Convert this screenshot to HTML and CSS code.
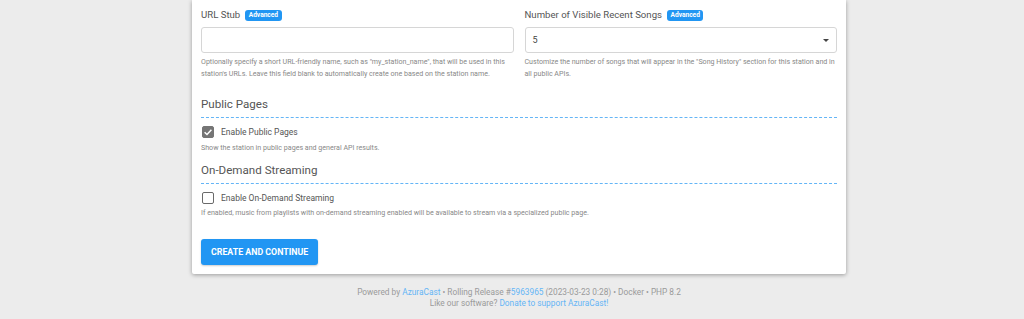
FILE: index.html
```html
<!DOCTYPE html>
<html>
<head>
<meta charset="utf-8">
<link rel="stylesheet" href="styles.css">
</head>
<body>
<div class="page">
  <div class="card">
    <div class="row">
      <div class="field">
        <div class="label">URL Stub <span class="badge">Advanced</span></div>
        <div class="input"></div>
        <div class="help">Optionally specify a short URL-friendly name, such as "my_station_name", that will be used in this station's URLs. Leave this field blank to automatically create one based on the station name.</div>
      </div>
      <div class="field">
        <div class="label">Number of Visible Recent Songs <span class="badge">Advanced</span></div>
        <div class="input select"><span>5</span><span class="caret"></span></div>
        <div class="help">Customize the number of songs that will appear in the "Song History" section for this station and in all public APIs.</div>
      </div>
    </div>

    <div class="section-title first">Public Pages</div>
    <div class="check-row"><span class="checkbox checked"><svg viewBox="0 0 12 12" width="12" height="12"><path d="M2.6 6.2 L5 8.5 L9.4 3.8" fill="none" stroke="#fff" stroke-width="1.5"/></svg></span><span class="check-label">Enable Public Pages</span></div>
    <div class="help small-gap">Show the station in public pages and general API results.</div>

    <div class="section-title">On-Demand Streaming</div>
    <div class="check-row"><span class="checkbox"></span><span class="check-label">Enable On-Demand Streaming</span></div>
    <div class="help tiny-gap">If enabled, music from playlists with on-demand streaming enabled will be available to stream via a specialized public page.</div>

    <button class="btn">CREATE AND CONTINUE</button>
  </div>
  <div class="footer">
    <div>Powered by <a>AzuraCast</a> • Rolling Release #<a>5963965</a> (2023-03-23 0:28) • Docker • PHP 8.2</div>
    <div>Like our software? <a>Donate to support AzuraCast!</a></div>
  </div>
</div>
</body>
</html>
```
FILE: styles.css
```css
html, body {
  margin: 0;
  padding: 0;
  background: #ececec;
  font-family: Roboto, "Liberation Sans", sans-serif;
}
.page {
  margin-left: 192px;
  width: 654px;
}
.card {
  background: #fff;
  box-shadow: 0 1px 4px rgba(0,0,0,0.35);
  padding: 8px 9px 9px 9px;
  border-radius: 0 0 2px 2px;
}
.row {
  display: grid;
  grid-template-columns: 1fr 1fr;
  column-gap: 11px;
}
.label {
  font-size: 9.6px;
  line-height: 14px;
  color: #555;
  display: flex;
  align-items: center;
  gap: 5px;
}
.badge {
  background: #2196f3;
  color: #fff;
  font-size: 6.6px;
  font-weight: 700;
  line-height: 11px;
  padding: 0 3.5px;
  border-radius: 3px;
}
.input {
  margin-top: 5px;
  height: 26px;
  box-sizing: border-box;
  border: 1px solid #d6d6d6;
  border-radius: 3px;
  background: #fff;
}
.select {
  display: flex;
  align-items: center;
  justify-content: space-between;
  padding: 0 7px 0 7px;
  font-size: 9px;
  color: #444;
}
.caret {
  width: 0;
  height: 0;
  border-left: 3px solid transparent;
  border-right: 3px solid transparent;
  border-top: 3px solid #444;
}
.help {
  margin-top: 3px;
  font-size: 7.1px;
  line-height: 12px;
  color: #888;
}
.help.small-gap { margin-top: 3px; }
.help.tiny-gap { margin-top: 2px; }
.section-title {
  margin-top: 8px;
  font-size: 11.6px;
  line-height: 16px;
  color: #555;
  padding-bottom: 5px;
  border-bottom: 1px dashed #64b5f6;
}
.section-title.first { margin-top: 16px; }
.check-row {
  margin-top: 7px;
  height: 14px;
  display: flex;
  align-items: center;
  gap: 7px;
  padding-left: 1px;
}
.checkbox {
  width: 12px;
  height: 12px;
  box-sizing: border-box;
  border: 1.5px solid #6a6a6a;
  border-radius: 2px;
  display: flex;
  align-items: center;
  justify-content: center;
}
.checkbox.checked {
  background: #757575;
  border-color: #757575;
}
.checkbox svg { display: block; flex: none; }
.check-label {
  font-size: 8.5px;
  color: #555;
}
.btn {
  display: block;
  margin-top: 20px;
  height: 26px;
  padding: 0 10px;
  border: none;
  border-radius: 3px;
  background: #2196f3;
  color: #fff;
  font-family: Roboto, "Liberation Sans", sans-serif;
  font-size: 8.8px;
  font-weight: 700;
  box-shadow: 0 1px 2px rgba(0,0,0,0.2);
}
.footer {
  margin-top: 13px;
  text-align: center;
  font-size: 8.3px;
  line-height: 11px;
  color: #9a9a9a;
}
.footer a { color: #64b5f6; }
```
